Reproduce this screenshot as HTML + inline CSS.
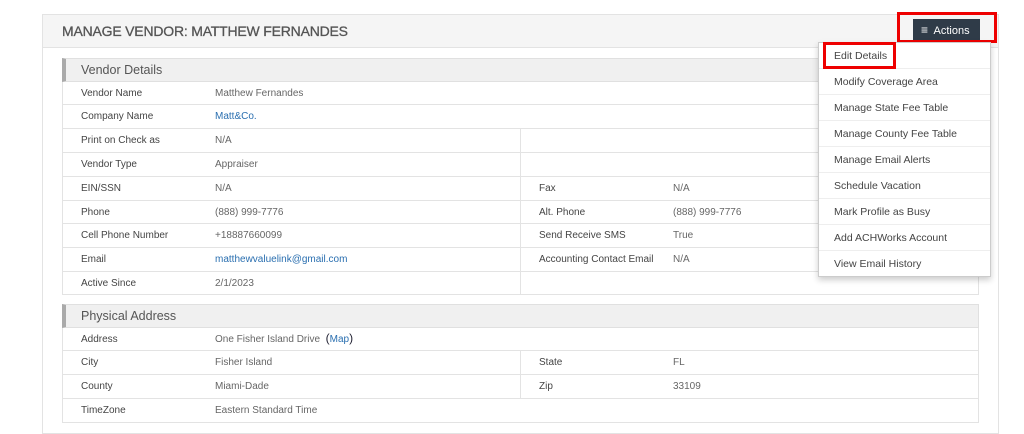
<!DOCTYPE html>
<html><head><style>
*{margin:0;padding:0;box-sizing:border-box}
body{width:1024px;height:427px;background:#fff;font-family:"Liberation Sans",sans-serif;position:relative;overflow:hidden;color:#444}
.abs{position:absolute}
.panel{left:42px;top:14px;width:957px;height:420px;border:1px solid #e3e3e3}
.phead{left:43px;top:15px;width:955px;height:33px;background:#f5f5f5;border-bottom:1px solid #e3e3e3}
.title{left:62px;top:23px;font-size:14px;color:#555;letter-spacing:-0.2px;-webkit-text-stroke:0.3px #555}
.sec{left:62px;width:917px;height:24px;background:#f0f0f0;border:1px solid #e0e0e0;border-left:4px solid #aaa;font-size:12.5px;color:#555;padding:4px 0 0 15px}
.row{left:62px;width:917px;border:1px solid #e3e3e3;border-top:none;font-size:10px;color:#666}
.row span{position:absolute;top:0;line-height:23px}
.l{left:18px;color:#444}
.v{left:152px}
.l2{left:476px;color:#444}
.v2{left:610px}
.div{position:absolute;left:457px;top:0;bottom:0;border-left:1px solid #e3e3e3}
a{color:#2a6fb0;text-decoration:none}
.btn{left:913px;top:19px;width:67px;height:23px;background:#2f3b48;color:#fff;font-size:11px;line-height:23px;padding-left:8px}
.menu{left:818px;top:42px;width:173px;height:235px;background:#fff;border:1px solid #ccc;box-shadow:0 3px 6px rgba(0,0,0,.2)}
.mi{height:26px;border-bottom:1px solid #eee;font-size:10.5px;color:#444;line-height:26px;padding-left:15px}
.red{border:3px solid #e00;position:absolute}
</style></head><body>
<div class="abs panel"></div>
<div class="abs phead"></div>
<div class="abs title">MANAGE VENDOR: MATTHEW FERNANDES</div>

<div class="abs sec" style="top:58px">Vendor Details</div>
<div class="abs row" style="top:82px;height:23px"><span class="l">Vendor Name</span><span class="v">Matthew Fernandes</span></div>
<div class="abs row" style="top:105px;height:24px"><span class="l">Company Name</span><span class="v"><a>Matt&amp;Co.</a></span></div>
<div class="abs row" style="top:129px;height:24px"><span class="l">Print on Check as</span><span class="v">N/A</span><div class="div"></div></div>
<div class="abs row" style="top:153px;height:24px"><span class="l">Vendor Type</span><span class="v">Appraiser</span><div class="div"></div></div>
<div class="abs row" style="top:177px;height:24px"><span class="l">EIN/SSN</span><span class="v">N/A</span><div class="div"></div><span class="l2">Fax</span><span class="v2">N/A</span></div>
<div class="abs row" style="top:201px;height:23px"><span class="l">Phone</span><span class="v">(888) 999-7776</span><div class="div"></div><span class="l2">Alt. Phone</span><span class="v2">(888) 999-7776</span></div>
<div class="abs row" style="top:224px;height:24px"><span class="l">Cell Phone Number</span><span class="v">+18887660099</span><div class="div"></div><span class="l2">Send Receive SMS</span><span class="v2">True</span></div>
<div class="abs row" style="top:248px;height:24px"><span class="l">Email</span><span class="v"><a>matthewvaluelink@gmail.com</a></span><div class="div"></div><span class="l2">Accounting Contact Email</span><span class="v2">N/A</span></div>
<div class="abs row" style="top:272px;height:23px"><span class="l">Active Since</span><span class="v">2/1/2023</span><div class="div"></div></div>

<div class="abs sec" style="top:304px">Physical Address</div>
<div class="abs row" style="top:328px;height:23px"><span class="l">Address</span><span class="v">One Fisher Island Drive &nbsp;<span style="position:static;line-height:normal;color:#223;font-size:12px">(</span><a>Map</a><span style="position:static;line-height:normal;color:#223;font-size:12px">)</span></span></div>
<div class="abs row" style="top:351px;height:24px"><span class="l">City</span><span class="v">Fisher Island</span><div class="div"></div><span class="l2">State</span><span class="v2">FL</span></div>
<div class="abs row" style="top:375px;height:24px"><span class="l">County</span><span class="v">Miami-Dade</span><div class="div"></div><span class="l2">Zip</span><span class="v2">33109</span></div>
<div class="abs row" style="top:399px;height:24px"><span class="l">TimeZone</span><span class="v">Eastern Standard Time</span></div>

<div class="abs btn"><span style="font-size:12px">&#8801;</span>&nbsp; Actions</div>
<div class="red" style="left:897px;top:12px;width:100px;height:31px"></div>
<div class="abs menu">
<div class="mi">Edit Details</div>
<div class="mi">Modify Coverage Area</div>
<div class="mi">Manage State Fee Table</div>
<div class="mi">Manage County Fee Table</div>
<div class="mi">Manage Email Alerts</div>
<div class="mi">Schedule Vacation</div>
<div class="mi">Mark Profile as Busy</div>
<div class="mi">Add ACHWorks Account</div>
<div class="mi" style="border:none">View Email History</div>
</div>
<div class="red" style="left:823px;top:42px;width:73px;height:27px"></div>
</body></html>
